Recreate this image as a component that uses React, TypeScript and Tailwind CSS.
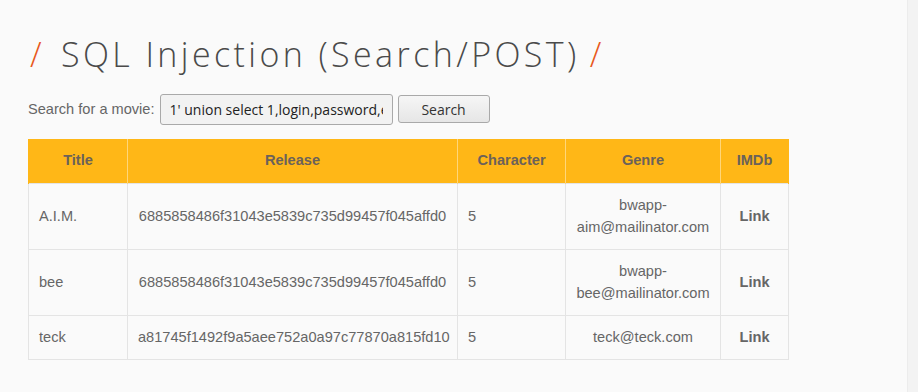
import React from "react";

type Movie = {
  title: string;
  release: string;
  character: string;
  genre: string[];
};

const MOVIES: Movie[] = [
  {
    title: "A.I.M.",
    release: "6885858486f31043e5839c735d99457f045affd0",
    character: "5",
    genre: ["bwapp-", "aim@mailinator.com"],
  },
  {
    title: "bee",
    release: "6885858486f31043e5839c735d99457f045affd0",
    character: "5",
    genre: ["bwapp-", "bee@mailinator.com"],
  },
  {
    title: "teck",
    release: "a81745f1492f9a5aee752a0a97c77870a815fd10",
    character: "5",
    genre: ["teck@teck.com"],
  },
];

const sans = "font-['Liberation_Sans',Arial,sans-serif]";

export default function App() {
  return (
    <div className="flex h-[392px] w-[918px] bg-[#f3f3f3]">
      <main className={`flex w-[908px] flex-col border-r border-[#ececec] bg-[#fafafa] pl-[28px] ${sans}`}>
        <h1 className="mt-[30px] flex h-[48px] items-center font-['Open_Sans',sans-serif] text-[34px] font-light leading-none tracking-[3.4px] text-[#4a4a4a]">
          <span className="ml-[2px] mr-[16px] text-[#e8581c]">/</span>
          <span>SQL Injection (Search/POST)</span>
          <span className="ml-[10px] text-[#e8581c]">/</span>
        </h1>

        <form className="mt-[16px] flex items-center" onSubmit={(e) => e.preventDefault()}>
          <label className="mr-[5px] text-[14.6px] text-[#666]">Search for a movie:</label>
          <input
            className="h-[31px] w-[233px] rounded-[3px] border border-[#a9a9a9] bg-[#f2f2f2] px-[9px] font-['Open_Sans',sans-serif] text-[14px] text-[#222] outline-none"
            defaultValue="1' union select 1,login,password,email"
          />
          <button
            type="submit"
            className="ml-[5px] mt-[1px] h-[28px] w-[92px] self-start rounded-[3px] border border-[#a9a9a9] bg-gradient-to-b from-[#f6f6f6] to-[#e6e6e6] font-['Open_Sans',sans-serif] text-[14px] text-[#333]"
          >
            Search
          </button>
        </form>

        <table className="mt-[14px] w-[760px] table-fixed border-collapse text-[14.6px] text-[#666]">
          <colgroup>
            <col className="w-[99px]" />
            <col className="w-[330px]" />
            <col className="w-[108px]" />
            <col className="w-[155px]" />
            <col className="w-[68px]" />
          </colgroup>
          <thead>
            <tr className="h-[44px] bg-[#ffb717] text-[#6b625a]">
              {["Title", "Release", "Character", "Genre", "IMDb"].map((h) => (
                <th key={h} className="border-x border-[#ffd67a] text-center font-bold first:border-l-[#ffb717] last:border-r-[#ffb717]">
                  {h}
                </th>
              ))}
            </tr>
          </thead>
          <tbody>
            {MOVIES.map((m) => (
              <tr key={m.title} className="leading-[22px]">
                <td className="border border-[#e4e4e4] px-[10px] py-[10.5px]">{m.title}</td>
                <td className="border border-[#e4e4e4] px-[10px] py-[10.5px] text-center">{m.release}</td>
                <td className="border border-[#e4e4e4] px-[10px] py-[10.5px]">{m.character}</td>
                <td className="border border-[#e4e4e4] px-[10px] py-[10.5px] text-center">
                  {m.genre.map((g) => (
                    <div key={g}>{g}</div>
                  ))}
                </td>
                <td className="border border-[#e4e4e4] px-[10px] py-[10.5px] text-center font-bold">
                  <a href="#" className="text-[#666]">Link</a>
                </td>
              </tr>
            ))}
          </tbody>
        </table>
      </main>
    </div>
  );
}
